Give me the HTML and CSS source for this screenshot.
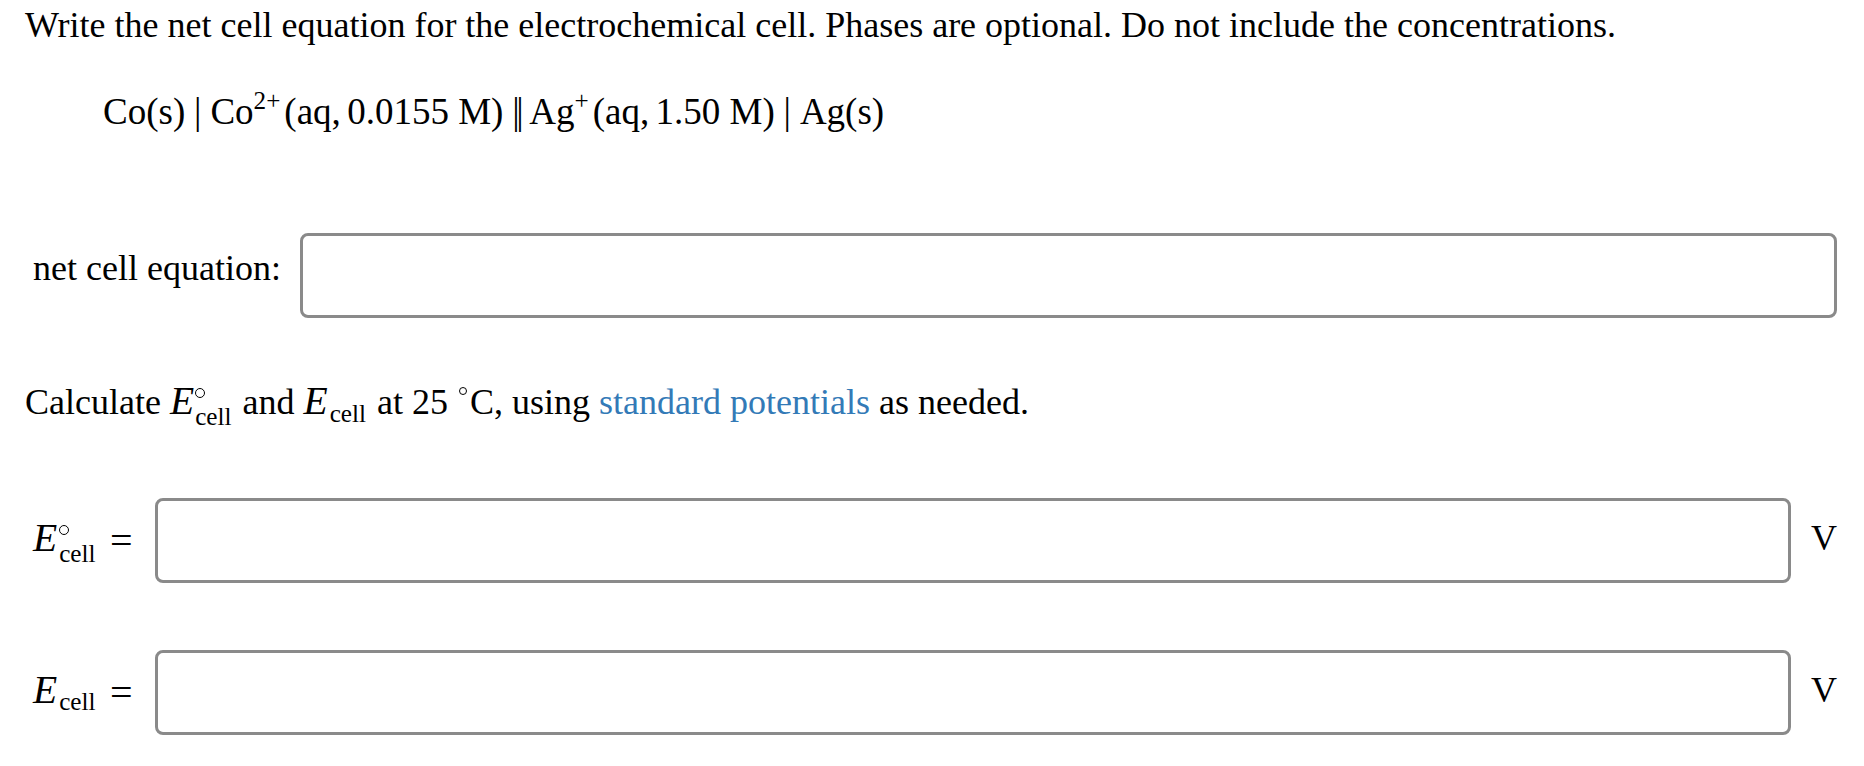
FILE: index.html
```html
<!DOCTYPE html>
<html>
<head>
<meta charset="utf-8">
<link rel="stylesheet" href="styles.css">
</head>
<body>
<div class="page">
  <p class="q">Write the net cell equation for the electrochemical cell. Phases are optional. Do not include the concentrations.</p>
  <div class="eq">Co(s)<span class="bar">|</span>Co<span class="sup">2+</span>(aq,<span class="sp"></span>0.0155 M)<span class="bar dbl">||</span>Ag<span class="sup">+</span>(aq,<span class="sp"></span>1.50 M)<span class="bar">|</span>Ag(s)</div>

  <div class="row row-eq">
    <span class="lbl">net cell equation:</span>
    <div class="box"></div>
  </div>

  <p class="q calc">Calculate <span class="m">E</span><span class="ss"><span class="ring"></span><span class="cell">cell</span></span> and <span class="m">E</span><span class="sb">cell</span> at 25 <span class="deg"></span>C, using <a class="link">standard potentials</a> as needed.</p>

  <div class="row row-e1">
    <span class="elbl"><span class="m">E</span><span class="ss"><span class="ring"></span><span class="cell">cell</span></span></span>
    <span class="eqs">=</span>
    <div class="box"></div>
    <span class="unit">V</span>
  </div>

  <div class="row row-e2">
    <span class="elbl"><span class="m">E</span><span class="sb">cell</span></span>
    <span class="eqs">=</span>
    <div class="box"></div>
    <span class="unit">V</span>
  </div>
</div>
</body>
</html>
```
FILE: styles.css
```css
html, body {
  margin: 0;
  background: #ffffff;
}
body {
  font-family: "Liberation Serif", "Times New Roman", serif;
  font-size: 36px;
  color: #000000;
}
.page {
  padding: 5px 27px 0 25px;
}
.q {
  margin: 0;
  line-height: 40px;
  white-space: nowrap;
}
.eq {
  margin-top: 47px;
  padding-left: 78px;
  line-height: 40px;
  font-size: 37px;
  white-space: nowrap;
}
.sup {
  font-size: 0.68em;
  display: inline-block;
  line-height: 0;
  vertical-align: 0.6em;
  margin-right: 4px;
}
.sp {
  display: inline-block;
  width: 0.17em;
}
.bar {
  margin: 0 0.24em;
}
.dbl {
  letter-spacing: -0.09em;
}
.row {
  display: flex;
  align-items: center;
  height: 85px;
  padding-left: 8px;
}
.row-eq {
  margin-top: 101px;
}
.lbl {
  line-height: 40px;
  margin-bottom: 15px;
  white-space: nowrap;
}
.box {
  flex: 1;
  height: 85px;
  box-sizing: border-box;
  border: 3px solid #8a8a8a;
  border-radius: 8px;
  background: #ffffff;
}
.row-eq .box {
  margin-left: 19px;
}
.calc {
  margin-top: 63px;
}
.m {
  font-style: italic;
  font-size: 1.1em;
  padding-right: 1px;
}
.ss {
  display: inline-block;
  vertical-align: -11px;
  margin: -22px 2px -22px 0;
  font-size: 0.7em;
  line-height: 22px;
}
.ss > span {
  display: block;
}
.ring {
  width: 8px;
  height: 8px;
  border: 1.6px solid #000;
  border-radius: 50%;
  margin: 6px 0 8px 0;
}
.sb {
  font-size: 0.7em;
  display: inline-block;
  line-height: 0;
  vertical-align: -0.3em;
  margin-left: 1px;
  margin-right: 2px;
}
.deg {
  display: inline-block;
  width: 6px;
  height: 6px;
  border: 1.4px solid #000;
  border-radius: 50%;
  vertical-align: 0.52em;
  margin: 0 3px 0 2px;
}
.link {
  color: #337ab7;
  text-decoration: none;
}
.row-e1 {
  margin-top: 76px;
}
.row-e2 {
  margin-top: 67px;
}
.elbl {
  width: 77px;
  line-height: 40px;
  margin-bottom: 5px;
  white-space: nowrap;
}
.elbl .ss {
  margin-left: 1px;
}
.eqs {
  font-size: 40px;
  line-height: 40px;
}
.row-e1 .box,
.row-e2 .box {
  margin-left: 22px;
}
.unit {
  margin-left: 20px;
  line-height: 40px;
  margin-bottom: 5px;
}
```
